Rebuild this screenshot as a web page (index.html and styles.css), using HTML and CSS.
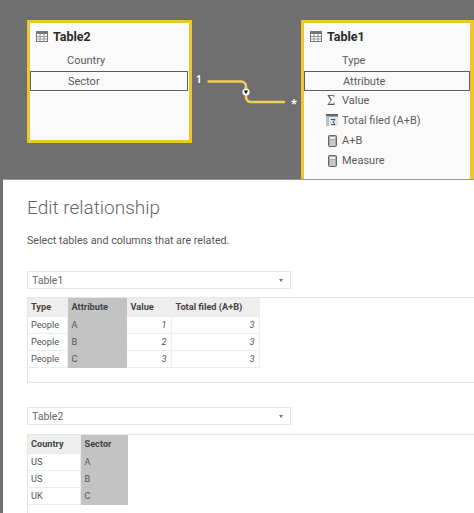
FILE: index.html
```
<!DOCTYPE html>
<html lang="en">
<head>
<meta charset="utf-8">
<title>Edit relationship</title>
<link rel="stylesheet" href="styles.css">
</head>
<body>
<svg width="0" height="0" class="defs">
  <symbol id="i-table" viewBox="0 0 12 11"><rect x="0.5" y="0.5" width="11" height="10" fill="#fff" stroke="#777"/><path d="M0 1h12v2H0z" fill="#777"/><path d="M4 3v7M8 3v7M1 5.500h10M1 8h10" stroke="#999" stroke-width="1" fill="none"/></symbol>
  <symbol id="i-calc" viewBox="0 0 9 12"><rect x="0.5" y="0.5" width="8" height="11" rx="1" fill="#aaa" stroke="#666"/><rect x="2" y="2" width="5" height="2" fill="#eee"/><path d="M2 6h5M2 8h5M2 10h5" stroke="#e4e4e4"/></symbol>
</svg>
<main class="screen">
  <section class="canvas">
    <article class="node node-two">
      <h2 class="node-title"><svg class="table-icon"><use href="#i-table"/></svg>Table2</h2>
      <ul class="fields">
        <li class="field">Country</li>
        <li class="field selected">Sector</li>
      </ul>
    </article>

    <svg class="link" viewBox="0 0 120 50" width="120" height="50">
      <path d="M17.500 16.500H51a5 5 0 0 1 5 5V32a5 5 0 0 0 5 5H95" fill="none" stroke="#f2cf4e" stroke-width="2.600"/>
      <circle cx="56" cy="27" r="3.600" fill="#fff"/>
      <path d="M53.800 25.500h4.400L56 29z" fill="#111"/>
    </svg>
    <span class="card-one">1</span>
    <span class="card-many">*</span>

    <article class="node node-one">
      <h2 class="node-title"><svg class="table-icon"><use href="#i-table"/></svg>Table1</h2>
      <ul class="fields">
        <li class="field">Type</li>
        <li class="field selected">Attribute</li>
        <li class="field">
          <span class="field-icon sigma">Σ</span>Value</li>
        <li class="field">
          <svg class="field-icon" viewBox="0 0 12 12" width="12" height="12"><rect width="12" height="12" fill="#dfe5ea"/><rect width="12" height="2.500" fill="#666"/><rect x="0" y="2.500" width="3" height="9.500" fill="#b6c2cc"/><path d="M5 5.500h4L7 8l2 2.500H5" fill="none" stroke="#456" stroke-width="1"/></svg>Total filed (A+B)</li>
        <li class="field">
          <svg class="field-icon calc"><use href="#i-calc"/></svg>A+B</li>
        <li class="field">
          <svg class="field-icon calc"><use href="#i-calc"/></svg>Measure</li>
      </ul>
    </article>
  </section>

  <section class="dialog">
    <h1 class="dialog-title">Edit relationship</h1>
    <p class="dialog-sub">Select tables and columns that are related.</p>

    <div class="select">Table1<span class="caret"></span></div>
    <div class="preview preview-one">
      <table class="grid">
        <colgroup><col class="c41"><col class="c59"><col class="c44"><col class="c88"></colgroup>
        <thead><tr><th>Type</th><th class="key">Attribute</th><th>Value</th><th>Total filed (A+B)</th></tr></thead>
        <tbody>
          <tr><td>People</td><td class="key">A</td><td class="num">1</td><td class="num">3</td></tr>
          <tr><td>People</td><td class="key">B</td><td class="num">2</td><td class="num">3</td></tr>
          <tr><td>People</td><td class="key">C</td><td class="num">3</td><td class="num">3</td></tr>
        </tbody>
      </table>
    </div>

    <div class="select second">Table2<span class="caret"></span></div>
    <div class="preview preview-two">
      <table class="grid">
        <colgroup><col class="c54"><col class="c47"></colgroup>
        <thead><tr><th>Country</th><th class="key">Sector</th></tr></thead>
        <tbody>
          <tr><td>US</td><td class="key">A</td></tr>
          <tr><td>US</td><td class="key">B</td></tr>
          <tr><td>UK</td><td class="key">C</td></tr>
        </tbody>
      </table>
    </div>
  </section>
</main>
</body>
</html>
```
FILE: styles.css
```
* { box-sizing: border-box; }
html, body { margin: 0; padding: 0; }
body { width: 474px; height: 513px; overflow: hidden; background: #6f6f6f; font-family: Roboto, "Open Sans", sans-serif; color: #555; }
.defs { position: absolute; }
.screen { display: flex; flex-direction: column; height: 513px; }

.canvas { position: relative; height: 179px; flex: none; background: #6f6f6f; overflow: hidden; }
.node { position: absolute; top: 20px; background: #fafafa; border: 3px solid #edc52c; padding-top: 2px; }
.node-two { left: 27px; width: 165px; height: 123px; }
.node-one { left: 301px; width: 173px; height: 170px; border-right-width: 4px; }
.node-title { display: flex; align-items: center; margin: 0; height: 22px; padding-left: 6px; font-size: 12.500px; font-weight: 700; color: #2b2b2b; }
.table-icon { width: 12px; height: 11px; margin-right: 5px; }
.fields { list-style: none; margin: 4px 0 0; padding: 0; }
.field { position: relative; height: 20px; line-height: 19px; padding-left: 37px; font-size: 11px; color: #5c5c5c; }
.field.selected { margin: 0 1px 0 0; height: 20px; border: 1px solid #5f5f5f; padding-left: 37px; line-height: 19px; }
.node-one .field { padding-left: 38px; }
.node-one .field.selected { margin-right: 0; }
.field-icon { position: absolute; left: 22px; top: 3px; display: block; }
.sigma { top: 0; left: 23px; font-size: 14px; line-height: 19px; font-family: "Liberation Serif", serif; color: #555; }
.calc { width: 9px; height: 12px; left: 24px; top: 4px; }

.link { position: absolute; left: 190px; top: 65px; }
.card-one, .card-many { position: absolute; color: #fff; font-weight: 700; line-height: 10px; }
.card-one { left: 196px; top: 75px; font-size: 10px; }
.card-many { left: 291px; top: 99px; font-size: 13px; }

.dialog { flex: 1; margin-left: 3px; background: #fff; border-top: 1px solid #9a9a9a; padding: 0 0 0 24px; }
.dialog-title { margin: 14px 0 0; height: 28px; line-height: 28px; font-size: 19px; font-weight: 300; color: #666; }
.dialog-sub { margin: 10px 0 0; height: 18px; line-height: 18px; font-size: 10.700px; color: #555; }
.select { position: relative; width: 264px; height: 18px; margin-top: 21px; padding-left: 4px; line-height: 17px; font-size: 10.500px; color: #666; background: #fff; border: 1px solid #e6e6e6; }
.select.second { margin-top: 24px; }
.caret { position: absolute; right: 7px; top: 7px; border: 2.500px solid transparent; border-top: 3px solid #777; border-bottom: 0; }

.preview { margin-top: 8px; border-left: 1px solid #e6e6e6; border-top: 1px solid #e6e6e6; }
.preview-one { height: 86px; border-bottom: 1px solid #e6e6e6; }
.preview-two { height: 80px; margin-top: 9px; }
.grid { border-collapse: collapse; table-layout: fixed; font-size: 9.200px; }
.c41 { width: 39px; } .c59 { width: 59px; } .c44 { width: 45px; } .c88 { width: 88px; }
.c54 { width: 52px; } .c47 { width: 47px; }
.grid th, .grid td { height: 17px; padding: 0 4px; text-align: left; border: 1px solid #ececec; border-top: 0; border-left: 0; color: #555; white-space: nowrap; overflow: hidden; }
.grid th { height: 18px; background: #eeeeee; font-weight: 700; color: #444; }
.grid th:first-child, .grid td:first-child { padding-left: 3px; }
.grid .key { background: #c3c3c3; border-color: #c3c3c3; }
.grid .num { text-align: right; font-style: italic; }
```
